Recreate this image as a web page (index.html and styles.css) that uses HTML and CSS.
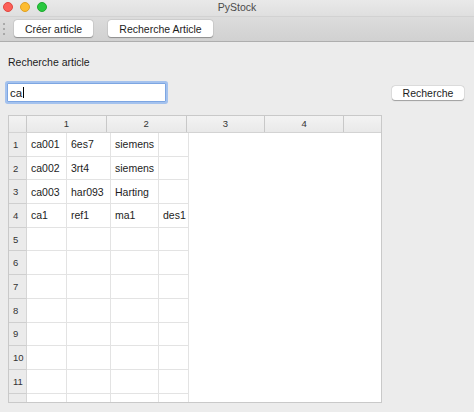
FILE: index.html
```html
<!doctype html>
<html lang="fr">
<head>
    <meta charset="UTF-8">
    <meta name="viewport" content="width=device-width, initial-scale=1.0">
    <title>PyStock</title>
    <link rel="stylesheet" href="styles.css">
</head>
<body>
    <div class="window">
        <div class="titlebar">
            <div class="lights">
                <span class="light red"></span>
                <span class="light yellow"></span>
                <span class="light green"></span>
            </div>
            <div class="title">PyStock</div>
            <div></div>
        </div>
        <div class="toolbar">
            <div class="grip"><span></span><span></span><span></span></div>
            <button class="tool-button">Créer article</button>
            <button class="tool-button">Recherche Article</button>
        </div>
        <div class="content">
            <div class="label">Recherche article</div>
            <div class="search-row">
                <div class="input">ca<span class="caret"></span></div>
                <button class="push-button">Recherche</button>
            </div>
            <div class="table">
                <div class="header">
                    <div class="section corner"></div>
                    <div class="section w80">1</div>
                    <div class="section w80">2</div>
                    <div class="section w79">3</div>
                    <div class="section w79">4</div>
                    <div class="section rest"></div>
                </div>
                <div class="grid" id="grid"></div>
            </div>
        </div>
    </div>
    <script>
        const rows = [
            ['ca001', '6es7', 'siemens', ''],
            ['ca002', '3rt4', 'siemens', ''],
            ['ca003', 'har093', 'Harting', ''],
            ['ca1', 'ref1', 'ma1', 'des1']
        ];
        const grid = document.getElementById('grid');
        for (let i = 0; i < 12; i++) {
            const head = document.createElement('div');
            head.className = 'row-head';
            head.textContent = i + 1;
            grid.appendChild(head);
            const data = rows[i] || ['', '', '', ''];
            data.forEach(text => {
                const cell = document.createElement('div');
                cell.className = 'cell';
                cell.textContent = text;
                grid.appendChild(cell);
            });
        }
    </script>
</body>
</html>
```

FILE: styles.css
```css
html, body {
    margin: 0;
    padding: 0;
}
body {
    width: 474px;
    height: 412px;
    overflow: hidden;
    background-color: #ececec;
    font-family: "Liberation Sans", Arial, sans-serif;
    font-size: 10.5px;
    color: #1c1c1c;
}
.window {
    display: flex;
    flex-direction: column;
    height: 100%;
}
.titlebar {
    display: grid;
    grid-template-columns: 1fr auto 1fr;
    align-items: center;
    height: 16px;
    background: linear-gradient(#e9e9e9, #dfdfdf);
    border-bottom: 1px solid #d2d2d2;
}
.lights {
    display: flex;
    gap: 7px;
    padding-left: 3px;
    margin-top: -2px;
}
.light {
    width: 10px;
    height: 10px;
    border-radius: 50%;
    box-sizing: border-box;
}
.red {
    background-color: #fc5f57;
    border: 0.5px solid #e1463f;
}
.yellow {
    background-color: #fdbc2e;
    border: 0.5px solid #dfa023;
}
.green {
    background-color: #29c83f;
    border: 0.5px solid #1eaa2f;
}
.title {
    font-size: 10.5px;
    color: #4b4b4b;
    margin-top: -2px;
}
.toolbar {
    display: flex;
    align-items: flex-start;
    height: 25px;
    padding-top: 3px;
    box-sizing: border-box;
    background: linear-gradient(#dcdcdc, #d1d1d1);
    border-bottom: 1px solid #aeaeae;
}
.grip {
    display: flex;
    flex-direction: column;
    gap: 3px;
    width: 14px;
    padding-top: 3px;
    padding-left: 3px;
    box-sizing: border-box;
}
.grip span {
    width: 2px;
    height: 2px;
    background-color: #9a9a9a;
    border-radius: 50%;
}
.tool-button, .push-button {
    font-family: "Liberation Sans", Arial, sans-serif;
    font-size: 10.5px;
    color: #1c1c1c;
    background-color: #fff;
    border: none;
    border-radius: 3px;
    box-shadow: 0 0.5px 1px rgba(0, 0, 0, 0.3), 0 0 0 0.5px rgba(0, 0, 0, 0.08);
    height: 17px;
    padding: 0;
}
.tool-button {
    width: 79px;
    margin-right: 15px;
}
.tool-button + .tool-button {
    width: 105px;
}
.content {
    padding: 0 10px 0 8px;
}
.label {
    margin-top: 14px;
    height: 13px;
    line-height: 13px;
}
.search-row {
    display: flex;
    justify-content: space-between;
    align-items: center;
    margin-top: 14px;
}
.input {
    width: 159px;
    height: 19px;
    box-sizing: border-box;
    margin-left: -1px;
    padding-left: 2px;
    font-size: 11.5px;
    background-color: #fff;
    border: 1px solid #7da6e2;
    border-radius: 1px;
    box-shadow: 0 0 0 2px #a4c2ee;
    display: flex;
    align-items: center;
}
.caret {
    width: 1px;
    height: 11px;
    background-color: #000;
    margin-left: 1px;
}
.push-button {
    width: 72px;
    height: 14px;
}
.table {
    width: 374px;
    height: 288px;
    margin-top: 13px;
    box-sizing: border-box;
    border: 1px solid #c9c9c9;
    background-color: #fff;
    overflow: hidden;
}
.header {
    display: flex;
    height: 16px;
    background: linear-gradient(#f3f3f3, #e9e9e9);
    border-bottom: 1px solid #d3d3d3;
}
.section {
    box-sizing: border-box;
    border-right: 1px solid #c8c8c8;
    text-align: center;
    font-size: 9.5px;
    line-height: 16px;
    color: #333;
}
.corner {
    width: 18px;
}
.w80 {
    width: 80px;
}
.w79 {
    width: 79px;
}
.rest {
    width: 37px;
    border-right: none;
}
.grid {
    display: grid;
    grid-template-columns: 18px 40px 44px 48px 30px;
    grid-auto-rows: 23.7px;
}
.row-head {
    box-sizing: border-box;
    background-color: #ebebeb;
    border-bottom: 1px solid #cfcfcf;
    border-right: 1px solid #d6d6d6;
    padding-left: 4px;
    font-size: 9.5px;
    color: #333;
    display: flex;
    align-items: center;
}
.cell {
    box-sizing: border-box;
    border-right: 1px solid #e3e3e3;
    border-bottom: 1px solid #e3e3e3;
    padding-left: 4px;
    display: flex;
    align-items: center;
    white-space: nowrap;
    overflow: hidden;
}
```
